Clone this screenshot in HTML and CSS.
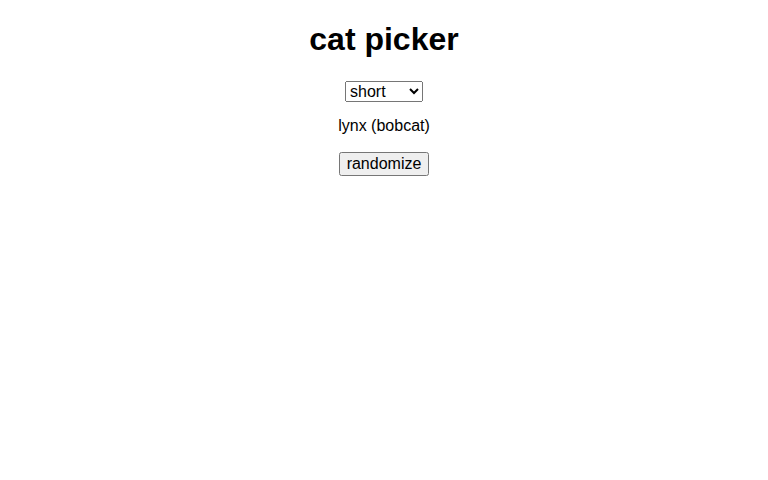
FILE: index.html
```html
<!DOCTYPE html>
<html>
<head>
<meta charset="utf-8">
<title>cat picker</title>
<link rel="stylesheet" href="styles.css">
</head>
<body>
<h1 class="title">cat picker</h1>
<select class="picker">
<option>short</option>
<option>long</option>
</select>
<p class="result">lynx (bobcat)</p>
<button class="btn">randomize</button>
</body>
</html>
```
FILE: styles.css
```css
body {
  margin: 0;
  padding: 8px;
  font-family: "Liberation Sans", Arial, sans-serif;
  display: flex;
  flex-direction: column;
  align-items: center;
}
.title {
  font-size: 32px;
  line-height: 37px;
  margin: 13px 0 23px;
}
.picker, .btn {
  font-family: "Liberation Sans", Arial, sans-serif;
  font-size: 16px;
}
.picker {
  width: 78px;
}
.result {
  line-height: 18px;
  margin: 15px 0 17px;
}
```
